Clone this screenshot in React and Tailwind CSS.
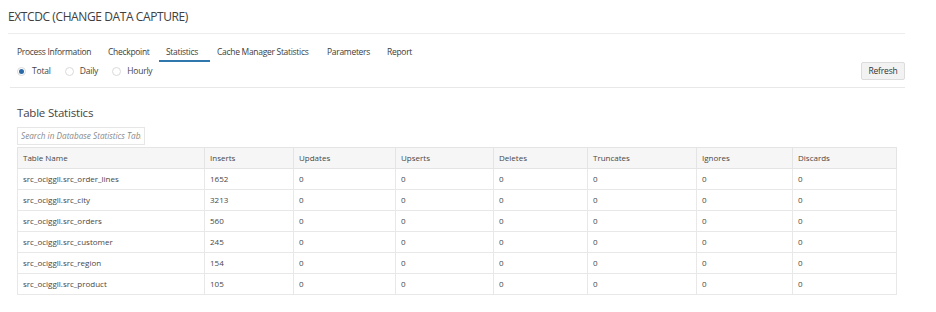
import React, { useState } from "react";

const tabs = [
  { name: "Process Information", w: "w-[91px]" },
  { name: "Checkpoint", w: "w-[58px]" },
  { name: "Statistics", w: "w-[51px]", active: true },
  { name: "Cache Manager Statistics", w: "w-[110px]" },
  { name: "Parameters", w: "w-[60px]" },
  { name: "Report", w: "w-[40px]" },
];

const columns = [
  { label: "Table Name", w: "w-[187px]" },
  { label: "Inserts", w: "w-[89px]" },
  { label: "Updates", w: "w-[102px]" },
  { label: "Upserts", w: "w-[98px]" },
  { label: "Deletes", w: "w-[94px]" },
  { label: "Truncates", w: "w-[109px]" },
  { label: "Ignores", w: "w-[96px]" },
  { label: "Discards", w: "w-[104px]" },
];

const rows = [
  ["src_ociggll.src_order_lines", 1652],
  ["src_ociggll.src_city", 3213],
  ["src_ociggll.src_orders", 560],
  ["src_ociggll.src_customer", 245],
  ["src_ociggll.src_region", 154],
  ["src_ociggll.src_product", 105],
];

function Radio({ label, checked, onClick }) {
  return (
    <button onClick={onClick} className="flex items-center gap-[6px] mr-[14px]">
      <span className="w-[9px] h-[9px] rounded-full border border-[#dadada] bg-white flex items-center justify-center">
        {checked && <span className="w-[5px] h-[5px] rounded-full bg-[#2a6aa8]" />}
      </span>
      <span>{label}</span>
    </button>
  );
}

export default function App() {
  const [range, setRange] = useState("Total");

  return (
    <div
      className="w-[936px] h-[312px] bg-white text-[#3d3d3d] overflow-hidden"
      style={{ fontFamily: '"Open Sans", "Noto Sans", sans-serif' }}
    >
      <div className="ml-2 w-[897px]">
        {/* Title */}
        <div className="h-[34px] flex items-center border-b border-[#ececec] text-[12px] text-[#404040] tracking-[-0.4px]">
          EXTCDC (CHANGE DATA CAPTURE)
        </div>

        {/* Tabs + radios */}
        <div className="ml-[2px] flex items-end justify-between border-b border-[#e8e8e8] pb-[8px]">
          <div>
            <div className="flex mt-[10px] text-[8.5px] tracking-[-0.3px]">
              {tabs.map((t) => (
                <div
                  key={t.name}
                  className={`${t.w} h-[18px] pl-[7px] pt-[2px] whitespace-nowrap border-b-2 ${t.active ? "border-[#2e78ad]" : "border-transparent"}`}
                >
                  {t.name}
                </div>
              ))}
            </div>
            <div className="flex items-center mt-[1px] ml-[7px] h-[16px] text-[8.5px] tracking-[-0.2px] text-[#444]">
              {["Total", "Daily", "Hourly"].map((r) => (
                <Radio key={r} label={r} checked={range === r} onClick={() => setRange(r)} />
              ))}
            </div>
          </div>
          <button className="w-[44px] h-[18px] mb-[-1px] bg-[#f2f2f2] border border-[#dcdcdc] rounded-[2px] text-[8.5px] tracking-[-0.2px] text-[#333]">
            Refresh
          </button>
        </div>

        {/* Table Statistics */}
        <div className="ml-[9px] w-[879px]">
          <div className="mt-[17px] text-[11.5px] tracking-[-0.2px] text-[#444] leading-[16px]">Table Statistics</div>
          <input
            placeholder="Search in Database Statistics Table"
            className="mt-[4px] w-[128px] h-[18px] border border-[#e6e6e6] px-[3px] text-[8.2px] italic placeholder:text-[#8a8a8a] outline-none"
          />
          <table className="mt-[2px] w-[879px] table-fixed border-collapse text-[8px] text-[#474747]">
            <thead>
              <tr className="bg-[#f6f6f6] h-[21px]">
                {columns.map((c) => (
                  <th
                    key={c.label}
                    className={`${c.w} text-left font-normal pl-[5px] border border-[#e4e4e4]`}
                  >
                    {c.label}
                  </th>
                ))}
              </tr>
            </thead>
            <tbody>
              {rows.map(([name, inserts]) => (
                <tr key={name} className="h-[21px]">
                  <td className="pl-[5px] border border-[#e8e8e8]">{name}</td>
                  <td className="pl-[5px] border border-[#e8e8e8]">{inserts}</td>
                  {[0, 1, 2, 3, 4, 5].map((i) => (
                    <td key={i} className="pl-[5px] border border-[#e8e8e8]">0</td>
                  ))}
                </tr>
              ))}
            </tbody>
          </table>
        </div>
      </div>
    </div>
  );
}
